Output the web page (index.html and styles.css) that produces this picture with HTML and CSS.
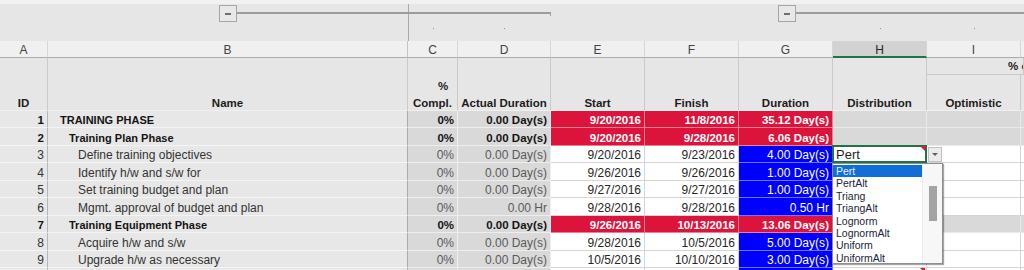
FILE: index.html
```html
<!DOCTYPE html>
<html>
<head>
<meta charset="utf-8">
<link rel="stylesheet" href="styles.css">
</head>
<body>
<div class="topstrip"></div>
<div class="outline">
  <div class="lvl1">
    <div class="grp g1"><span class="obtn"><span class="minus"></span></span><span class="obar end"></span></div>
    <div class="grp g2"><span class="obtn"><span class="minus"></span></span><span class="obar"></span></div>
  </div>
  <div class="lvl2">
    <span></span><span></span><span class="dot"></span><span class="dot"></span><span></span><span></span><span></span><span class="dot"></span><span class="dot"></span><span></span>
  </div>
</div>
<div class="sheet">
  <!-- column letters -->
  <div class="c ch">A</div><div class="c ch">B</div><div class="c ch">C</div><div class="c ch">D</div><div class="c ch">E</div><div class="c ch">F</div><div class="c ch">G</div><div class="c ch sel">H</div><div class="c ch">I</div><div class="c ch last"></div>

  <!-- header -->
  <div class="c hd tall">ID</div>
  <div class="c hd tall">Name</div>
  <div class="c hd tall"><span class="wrap"><span class="l1">%</span><span>Compl.</span></span></div>
  <div class="c hd tall">Actual Duration</div>
  <div class="c hd tall">Start</div>
  <div class="c hd tall">Finish</div>
  <div class="c hd tall">Duration</div>
  <div class="c hd tall">Distribution</div>
  <div class="c hd merged">% of Most Likely</div>
  <div class="c hd">Optimistic</div>
  <div class="c hd"></div>

  <!-- row 1 -->
  <div class="c g id b">1</div>
  <div class="c g nm b l0">TRAINING PHASE</div>
  <div class="c gd num b">0%</div>
  <div class="c gd num b">0.00 Day(s)</div>
  <div class="c red num b">9/20/2016</div>
  <div class="c red num b">11/8/2016</div>
  <div class="c red num b">35.12 Day(s)</div>
  <div class="c gs"></div><div class="c gs"></div><div class="c gs"></div>

  <!-- row 2 -->
  <div class="c g id b">2</div>
  <div class="c g nm b l1">Training Plan Phase</div>
  <div class="c gd num b">0%</div>
  <div class="c gd num b">0.00 Day(s)</div>
  <div class="c red num b">9/20/2016</div>
  <div class="c red num b">9/28/2016</div>
  <div class="c red num b">6.06 Day(s)</div>
  <div class="c gs"></div><div class="c gs"></div><div class="c gs"></div>

  <!-- row 3 -->
  <div class="c g id">3</div>
  <div class="c g nm l2">Define training objectives</div>
  <div class="c gd num">0%</div>
  <div class="c gd num">0.00 Day(s)</div>
  <div class="c w num">9/20/2016</div>
  <div class="c w num">9/23/2016</div>
  <div class="c blue num">4.00 Day(s)</div>
  <div class="c w dist cm active">Pert
    <span class="ddbtn"><span class="tri"></span></span>
    <div class="ddlist">
      <div class="items">
        <div class="it on">Pert</div>
        <div class="it">PertAlt</div>
        <div class="it">Triang</div>
        <div class="it">TriangAlt</div>
        <div class="it">Lognorm</div>
        <div class="it">LognormAlt</div>
        <div class="it">Uniform</div>
        <div class="it">UniformAlt</div>
      </div>
      <div class="sbar"><div class="thumb"></div></div>
    </div>
  </div>
  <div class="c w"></div><div class="c w"></div>

  <!-- row 4 -->
  <div class="c g id">4</div>
  <div class="c g nm l2">Identify h/w and s/w for</div>
  <div class="c gd num">0%</div>
  <div class="c gd num">0.00 Day(s)</div>
  <div class="c w num">9/26/2016</div>
  <div class="c w num">9/26/2016</div>
  <div class="c blue num">1.00 Day(s)</div>
  <div class="c w dist cm"></div>
  <div class="c w"></div><div class="c w"></div>

  <!-- row 5 -->
  <div class="c g id">5</div>
  <div class="c g nm l2">Set training budget and plan</div>
  <div class="c gd num">0%</div>
  <div class="c gd num">0.00 Day(s)</div>
  <div class="c w num">9/27/2016</div>
  <div class="c w num">9/27/2016</div>
  <div class="c blue num">1.00 Day(s)</div>
  <div class="c w dist cm"></div>
  <div class="c w"></div><div class="c w"></div>

  <!-- row 6 -->
  <div class="c g id">6</div>
  <div class="c g nm l2">Mgmt. approval of budget and plan</div>
  <div class="c gd num">0%</div>
  <div class="c gd num">0.00 Hr</div>
  <div class="c w num">9/28/2016</div>
  <div class="c w num">9/28/2016</div>
  <div class="c blue num">0.50 Hr</div>
  <div class="c w dist cm"></div>
  <div class="c w"></div><div class="c w"></div>

  <!-- row 7 -->
  <div class="c g id b">7</div>
  <div class="c g nm b l1">Training Equipment Phase</div>
  <div class="c gd num b">0%</div>
  <div class="c gd num b">0.00 Day(s)</div>
  <div class="c red num b">9/26/2016</div>
  <div class="c red num b">10/13/2016</div>
  <div class="c red num b">13.06 Day(s)</div>
  <div class="c gs"></div><div class="c gs"></div><div class="c gs"></div>

  <!-- row 8 -->
  <div class="c g id">8</div>
  <div class="c g nm l2">Acquire h/w and s/w</div>
  <div class="c gd num">0%</div>
  <div class="c gd num">0.00 Day(s)</div>
  <div class="c w num">9/28/2016</div>
  <div class="c w num">10/5/2016</div>
  <div class="c blue num">5.00 Day(s)</div>
  <div class="c w dist cm"></div>
  <div class="c w"></div><div class="c w"></div>

  <!-- row 9 -->
  <div class="c g id">9</div>
  <div class="c g nm l2">Upgrade h/w as necessary</div>
  <div class="c gd num">0%</div>
  <div class="c gd num">0.00 Day(s)</div>
  <div class="c w num">10/5/2016</div>
  <div class="c w num">10/10/2016</div>
  <div class="c blue num">3.00 Day(s)</div>
  <div class="c w dist cm"></div>
  <div class="c w"></div><div class="c w"></div>

  <!-- row 10 (only its top edge is in view) -->
  <div class="c g id"></div>
  <div class="c g nm l2"></div>
  <div class="c gd num"></div>
  <div class="c gd num"></div>
  <div class="c w num"></div>
  <div class="c w num"></div>
  <div class="c blue num"></div>
  <div class="c w dist cm"></div>
  <div class="c w"></div><div class="c w"></div>
</div>
</body>
</html>
```
FILE: styles.css
```css
html, body {
  margin: 0;
  padding: 0;
}
body {
  width: 1024px;
  height: 270px;
  overflow: hidden;
  background: #e6e6e6;
  font-family: "Liberation Sans", Arial, sans-serif;
}

.topstrip {
  height: 4px;
  background: #f1f1f1;
}

/* outline (grouping) area */
.outline {
  height: 37px;
  background: linear-gradient(#a9a9a9, #a9a9a9) 408px 0 / 1px 100% no-repeat, #e6e6e6;
}
.lvl1 {
  height: 21px;
  display: flex;
  align-items: flex-start;
  padding-top: 1px;
  box-sizing: border-box;
}
.grp {
  display: flex;
  align-items: flex-start;
}
.g1 { margin-left: 219px; }
.g2 { margin-left: 227px; flex: 1; }
.obtn {
  width: 18px;
  height: 17px;
  box-sizing: border-box;
  border: 1px solid #a6a6a6;
  background: #e8e8e8;
  display: flex;
  align-items: center;
  justify-content: center;
}
.minus {
  width: 6px;
  height: 2px;
  background: #6e6e6e;
}
.obar {
  margin-top: 7px;
  height: 2px;
  background: #9c9c9c;
  flex: 1;
}
.g1 .obar {
  width: 314px;
  flex: none;
  height: 4px;
  background: none;
  border-top: 2px solid #9c9c9c;
  border-right: 1px solid #9c9c9c;
  box-sizing: border-box;
}
.lvl2 {
  height: 16px;
  display: grid;
  grid-template-columns: 48px 360px 50px 93px 94px 94px 94px 94px 94px 3px;
  align-items: start;
}
.lvl2 .dot {
  justify-self: center;
  margin-top: 3px;
  width: 1px;
  height: 1px;
  background: #8a8a8a;
}

/* sheet grid */
.sheet {
  display: grid;
  grid-template-columns: 48px 360px 50px 93px 94px 94px 94px 94px 94px 3px;
  grid-template-rows: 17px 17px 36px 17px 18px 17px 18px 17px 18px 17px 18px 17px 18px;
}
.c {
  box-sizing: border-box;
  border-right: 1px solid #d4d4d4;
  border-bottom: 1px solid #d4d4d4;
  display: flex;
  align-items: flex-end;
  padding: 0 3px 0 3px;
  white-space: nowrap;
  overflow: hidden;
  font-size: 12px;
  line-height: 13px;
  color: #333;
}

/* column letters */
.ch {
  background: #f0f0f0;
  border-right-color: #d6d6d6;
  border-bottom-color: #ababab;
  justify-content: center;
  align-items: center;
  padding: 2px 0 0;
  color: #444;
  font-size: 12px;
  line-height: 14px;
}
.ch:nth-child(2) { border-right-color: #c4c4c4; }
.ch.sel {
  background: #d2d2d2;
  border-bottom: 2px solid #217346;
  color: #262626;
  padding-top: 3px;
}
.ch.last { border-right: none; }

/* header */
.hd {
  background: #e6e6e6;
  border-right-color: #cacaca;
  border-bottom-color: #f0f0f0;
  justify-content: center;
  font-weight: bold;
  font-size: 11.5px;
  line-height: 14px;
  color: #1c1c1c;
  padding: 0 2px 0;
}
.hd.tall { grid-row: span 2; }
.hd.merged {
  grid-column: span 2;
  justify-content: flex-start;
  padding-left: 81px;
  border-bottom-color: #cacaca;
  padding-bottom: 1px;
}
.wrap {
  display: flex;
  flex-direction: column;
  align-items: center;
}
.wrap .l1 { margin-bottom: 3px; }

/* data cells */
.g {
  background: #e7e7e7;
  border-bottom-color: #f4f4f4;
}
.id {
  justify-content: flex-end;
  border-right-color: #b6b6b6;
}
.nm { border-right-color: #ababab; }
.l0 { padding-left: 12px; }
.l1 { padding-left: 21px; }
.l2 { padding-left: 30px; }
.num { justify-content: flex-end; }
.gd {
  background: #d9d9d9;
  border-color: #eeeeee;
  color: #595959;
}
.w {
  background: #ffffff;
  color: #262626;
}
.red {
  background: #dc143c;
  color: #ffffff;
  border-color: rgba(255, 255, 255, 0.45);
}
.blue {
  background: #0000ff;
  color: #ffffff;
  border-color: rgba(255, 255, 255, 0.45);
}
.gs {
  background: #d9d9d9;
  border-color: #e9e9e9;
}
.b {
  font-weight: bold;
  font-size: 11.5px;
  color: #141414;
}
.nm.b { font-size: 11px; }
.red.b { color: #ffffff; }

/* distribution cells */
.dist {
  font-size: 13px;
  line-height: 15px;
  color: #1e1e1e;
  position: relative;
}
.cm::after {
  content: "";
  position: absolute;
  top: 0;
  right: 1px;
  border-top: 5px solid #e3172f;
  border-left: 5px solid transparent;
}
.active {
  overflow: visible;
  z-index: 5;
}
.active::before {
  content: "";
  position: absolute;
  left: -1px;
  top: -1px;
  right: -1px;
  bottom: -1px;
  border: 2px solid #217346;
  box-sizing: border-box;
  pointer-events: none;
}
.ddbtn {
  position: absolute;
  left: 95px;
  top: 1px;
  width: 14px;
  height: 15px;
  box-sizing: border-box;
  border: 1px solid #c2c2c2;
  background: #ececec;
  display: flex;
  align-items: center;
  justify-content: center;
}
.tri {
  width: 0;
  height: 0;
  border-left: 3px solid transparent;
  border-right: 3px solid transparent;
  border-top: 3px solid #606060;
}
.ddlist {
  position: absolute;
  left: -1px;
  top: 17px;
  width: 111px;
  height: 101px;
  box-sizing: border-box;
  border: 1px solid #8f8f8f;
  background: #ffffff;
  box-shadow: 1px 1px 1px rgba(0, 0, 0, 0.35);
  display: flex;
  font-size: 10.5px;
  color: #20253a;
}
.items {
  width: 89px;
  padding-top: 1px;
}
.it {
  height: 12.4px;
  line-height: 12.4px;
  padding-left: 3px;
}
.it.on {
  background: #0f6fd6;
  color: #e8f1ff;
}
.sbar {
  flex: 1;
  background: #f7f7f7;
  border-left: 1px solid #ececec;
  position: relative;
}
.thumb {
  margin: 22px 0 0 6px;
  width: 8px;
  height: 35px;
  background: #a3a3a3;
}
```
